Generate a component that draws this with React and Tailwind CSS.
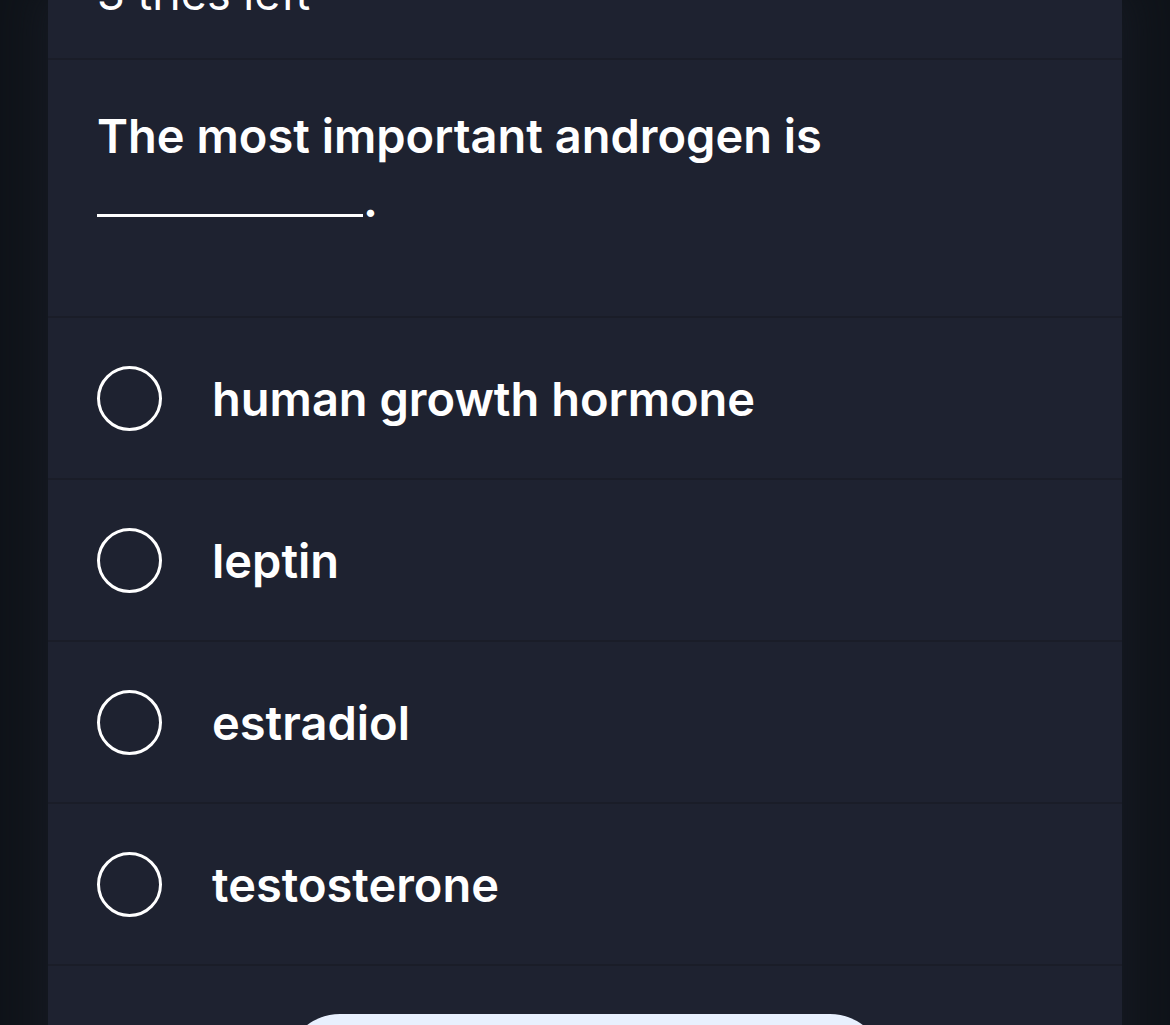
import { useState } from 'react';

const options = ['human growth hormone', 'leptin', 'estradiol', 'testosterone'];

export default function App() {
  const [picked, setPicked] = useState(null);

  return (
    <div className="min-h-screen bg-[#0f1319] overflow-hidden" style={{ fontFamily: 'Inter, "Noto Sans", sans-serif' }}>
      <div className="mx-[48px] bg-[#1e2230] text-white shadow-[0_0_40px_10px_rgba(24,28,38,0.7)]">
        {/* tries counter, scrolled partly off the top */}
        <div className="flex h-[60px] flex-col border-b-2 border-[#1a1d28] px-[49px]">
          <div className="-mt-[31px] text-[45px] leading-[50px] font-normal text-white">3 tries left</div>
        </div>

        {/* question */}
        <div className="border-b-2 border-[#1a1d28] px-[49px] pt-[44px] pb-[84px]">
          <p className="text-[47px] leading-[64px] font-semibold">
            The most important androgen is
            <br />
            <span className="inline-block w-[266px] border-b-[3px] border-white align-baseline"></span>.
          </p>
        </div>

        {/* answers */}
        {options.map((opt, i) => (
          <button
            key={opt}
            onClick={() => setPicked(i)}
            className="flex h-[162px] w-full items-center gap-[50px] border-b-2 border-[#1a1d28] px-[49px] text-left"
          >
            <span className="flex h-[65px] w-[65px] shrink-0 items-center justify-center rounded-full border-[3px] border-white">
              {picked === i && <span className="h-[37px] w-[37px] rounded-full bg-white" />}
            </span>
            <span className="text-[47px] font-semibold leading-none">{opt}</span>
          </button>
        ))}

        <div className="flex justify-center pt-[48px] pb-[40px]">
          <button className="h-[110px] w-[600px] rounded-full bg-[#e8f0fe] text-[40px] font-semibold text-[#1e2230]">
            Check
          </button>
        </div>
      </div>
    </div>
  );
}
